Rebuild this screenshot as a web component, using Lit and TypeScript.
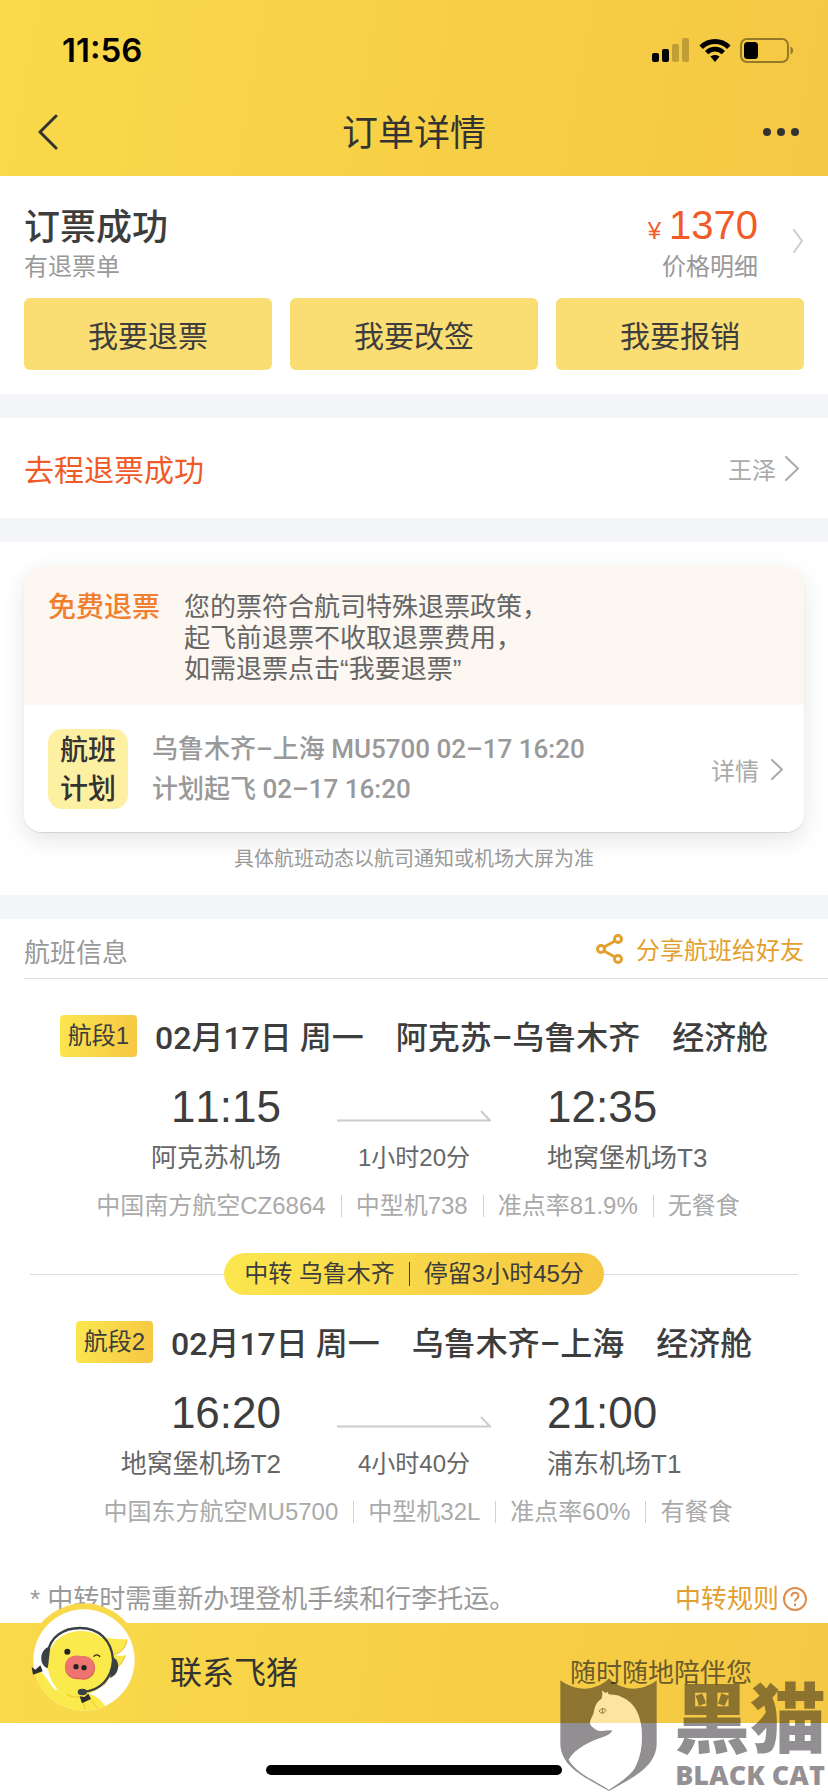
import { LitElement, html, css, svg } from "lit";
import { customElement, property } from "lit/decorators.js";

interface Leg {
  tag: string;
  date: string;
  route: string;
  cabin: string;
  depart: string;
  departAirport: string;
  duration: string;
  arrive: string;
  arriveAirport: string;
  facts: string[];
}

const LEGS: Leg[] = [
  {
    tag: "航段1",
    date: "02月17日 周一",
    route: "阿克苏–乌鲁木齐",
    cabin: "经济舱",
    depart: "11:15",
    departAirport: "阿克苏机场",
    duration: "1小时20分",
    arrive: "12:35",
    arriveAirport: "地窝堡机场T3",
    facts: ["中国南方航空CZ6864", "中型机738", "准点率81.9%", "无餐食"],
  },
  {
    tag: "航段2",
    date: "02月17日 周一",
    route: "乌鲁木齐–上海",
    cabin: "经济舱",
    depart: "16:20",
    departAirport: "地窝堡机场T2",
    duration: "4小时40分",
    arrive: "21:00",
    arriveAirport: "浦东机场T1",
    facts: ["中国东方航空MU5700", "中型机32L", "准点率60%", "有餐食"],
  },
];

const chevron = (w: number, h: number, stroke: number) => html`
  <svg class="chevron" width=${w} height=${h} viewBox="0 0 ${w} ${h}" aria-hidden="true">
    ${svg`<path d="M${stroke} ${stroke / 2} L${w - stroke} ${h / 2} L${stroke} ${h - stroke / 2}"
      fill="none" stroke="currentColor" stroke-width=${stroke} stroke-linecap="round" stroke-linejoin="round"/>`}
  </svg>
`;

@customElement("flight-leg")
export class FlightLeg extends LitElement {
  @property({ attribute: false }) leg!: Leg;

  static styles = css`
    :host {
      display: block;
    }
    .head {
      display: flex;
      justify-content: center;
      align-items: center;
      gap: 18px;
      height: 42px;
    }
    .tag {
      padding: 0 8px;
      border-radius: 4px;
      background: linear-gradient(100deg, #fbe74e, #f6c643);
      color: #3d3d3d;
      font-size: 24px;
      line-height: 42px;
    }
    .title {
      margin: 0;
      padding-top: 4px;
      display: flex;
      gap: 32px;
      color: #3d3d3d;
      font-family: Roboto, "Noto Sans CJK SC", sans-serif;
      font-size: 32px;
      font-weight: 500;
      line-height: 42px;
    }
    .times {
      display: grid;
      grid-template-columns: 1fr 154px 1fr;
      column-gap: 56px;
      row-gap: 7px;
      margin-top: 24px;
      align-items: center;
      color: #666;
      font-size: 26px;
      line-height: 36px;
    }
    .depart {
      text-align: right;
    }
    .clock {
      color: #3d3d3d;
      font-size: 44px;
      font-kerning: none;
      line-height: 52px;
    }
    .arrow {
      display: block;
      padding-top: 18px;
    }
    .duration {
      text-align: center;
      font-size: 24px;
    }
    .facts {
      display: flex;
      justify-content: center;
      margin: 15px 0 0;
      padding: 0 0 0 8px;
      list-style: none;
      color: #aaa;
      font-size: 24px;
      line-height: 30px;
    }
    .fact {
      display: flex;
      align-items: center;
    }
    .fact + .fact::before {
      content: "";
      width: 1px;
      height: 22px;
      margin: 0 14px 0 15px;
      background: #d0d0d0;
    }
  `;

  render() {
    const l = this.leg;
    return html`
      <div class="head">
        <span class="tag">${l.tag}</span>
        <h3 class="title"><span>${l.date}</span><span>${l.route}</span><span>${l.cabin}</span></h3>
      </div>
      <div class="times">
        <span class="depart clock">${l.depart}</span>
        <svg class="arrow" width="154" height="12" viewBox="0 0 154 12" aria-hidden="true">
          <path d="M0 10.5H153L144 1" fill="none" stroke="#ccc" stroke-width="2" />
        </svg>
        <span class="clock">${l.arrive}</span>
        <span class="depart">${l.departAirport}</span>
        <span class="duration">${l.duration}</span>
        <span>${l.arriveAirport}</span>
      </div>
      <ul class="facts">
        ${l.facts.map((f) => html`<li class="fact">${f}</li>`)}
      </ul>
    `;
  }
}

@customElement("app-root")
export class AppRoot extends LitElement {
  static styles = css`
    :host {
      display: block;
      background: #fff;
      color: #333;
      font-family: "Liberation Sans", "Noto Sans CJK SC", sans-serif;
    }
    * {
      box-sizing: border-box;
    }
    button {
      padding: 0;
      border: 0;
      background: none;
      color: inherit;
      font: inherit;
      cursor: pointer;
    }
    a {
      color: inherit;
      text-decoration: none;
    }
    h1,
    h2,
    p {
      margin: 0;
    }
    svg {
      display: block;
    }
    .page {
      position: relative;
      overflow: hidden;
    }
    .top {
      background: linear-gradient(100deg, #f9da4b, #f7d046 50%, #f5c843);
    }
    .status {
      display: flex;
      justify-content: space-between;
      align-items: center;
      height: 88px;
      padding: 12px 34px 0 62px;
      color: #000;
    }
    .clock {
      font-family: Inter, sans-serif;
      font-size: 33px;
      font-weight: 600;
      line-height: 40px;
    }
    .signals {
      display: flex;
      align-items: center;
      gap: 9px;
    }
    .nav {
      display: grid;
      grid-template-columns: 60px 1fr 60px;
      align-items: center;
      height: 88px;
      padding: 0 28px;
    }
    .nav-title {
      padding-top: 4px;
      text-align: center;
      font-size: 36px;
      font-weight: 400;
      line-height: 48px;
    }
    .back {
      justify-self: start;
      padding: 8px 10px;
    }
    .more {
      justify-self: end;
      padding: 10px 0;
    }
    .band {
      border-bottom: 24px solid #f4f5f8;
    }
    .summary {
      padding: 26px 24px 24px;
    }
    .summary-row {
      display: flex;
      align-items: center;
      justify-content: space-between;
    }
    .state {
      font-size: 36px;
      font-weight: 500;
      line-height: 52px;
      color: #3d3d3d;
    }
    .sub {
      color: #999;
      font-size: 24px;
      line-height: 26px;
    }
    .price-link {
      display: flex;
      align-items: center;
      gap: 34px;
      color: #ccc;
      text-align: right;
    }
    .price {
      display: flex;
      justify-content: flex-end;
      align-items: baseline;
      gap: 8px;
      height: 52px;
      color: #f05b28;
      font-size: 40px;
      line-height: 46px;
    }
    .yen {
      font-size: 24px;
      line-height: 30px;
    }
    .actions {
      display: grid;
      grid-template-columns: repeat(3, 1fr);
      gap: 18px;
      margin-top: 18px;
    }
    .action {
      height: 72px;
      border-radius: 6px;
      background: #fade74;
      color: #3d3d3d;
      font-size: 30px;
    }
    .refund {
      display: flex;
      justify-content: space-between;
      align-items: center;
      height: 100px;
      padding: 0 28px 0 24px;
      color: #f05b28;
      font-size: 30px;
    }
    .more-link {
      display: flex;
      align-items: center;
      gap: 8px;
      color: #aaa;
      font-size: 24px;
    }
    .plan {
      padding: 24px 24px 21px;
    }
    .card {
      overflow: hidden;
      border-radius: 18px;
      box-shadow: 0 8px 24px rgba(0, 0, 0, 0.1), 0 1px 1px rgba(0, 0, 0, 0.12);
    }
    .policy {
      display: flex;
      gap: 24px;
      padding: 26px 24px 20px;
      background: #fcf7f1;
      color: #666;
      font-size: 26px;
      line-height: 31px;
    }
    .free {
      flex: none;
      color: #f08030;
      font-size: 28px;
      font-weight: 500;
    }
    .flight {
      display: flex;
      align-items: center;
      padding: 24px 20px 23px 24px;
      background: #fff;
    }
    .plan-tag {
      width: 80px;
      height: 80px;
      padding-top: 2px;
      border-radius: 14px;
      background: #fdf0a3;
      text-align: center;
      font-size: 28px;
      font-weight: 500;
      line-height: 39px;
    }
    .plan-text {
      flex: 1;
      padding-left: 24px;
      color: #999;
      font-family: Roboto, "Noto Sans CJK SC", sans-serif;
      font-size: 26px;
      font-weight: 500;
      line-height: 40px;
    }
    .flight .more-link {
      gap: 11px;
    }
    .disclaimer {
      margin-top: 12px;
      text-align: center;
      color: #999;
      font-size: 20px;
      line-height: 30px;
    }
    .info-head {
      display: flex;
      justify-content: space-between;
      align-items: center;
      height: 60px;
      margin-left: 24px;
      padding-right: 24px;
      border-bottom: 1px solid #ddd;
    }
    .info-title {
      padding-top: 4px;
      color: #999;
      font-size: 26px;
      font-weight: 400;
    }
    .share {
      display: flex;
      align-items: center;
      gap: 12px;
      color: #e3a02f;
      font-size: 24px;
    }
    .legs {
      padding-top: 36px;
    }
    .transfer {
      display: flex;
      align-items: center;
      margin: 32px 30px 26px;
    }
    .transfer::before,
    .transfer::after {
      content: "";
      flex: 1;
      height: 1px;
      background: #ddd;
    }
    .pill {
      display: flex;
      align-items: center;
      gap: 14px;
      padding: 0 20px;
      border-radius: 21px;
      background: linear-gradient(100deg, #fbe74e, #f6c643);
      color: #3d3d3d;
      font-size: 24px;
      line-height: 42px;
    }
    .pill-bar {
      width: 1px;
      height: 24px;
      background: #3d3d3d;
    }
    .note {
      display: flex;
      justify-content: space-between;
      align-items: center;
      margin-top: 54px;
      padding: 0 20px 6px 30px;
      color: #999;
      font-size: 26px;
      line-height: 36px;
    }
    .rules {
      display: flex;
      align-items: center;
      gap: 3px;
      color: #e3a02f;
    }
    .contact {
      position: relative;
      display: flex;
      justify-content: space-between;
      align-items: center;
      width: 100%;
      height: 100px;
      padding: 0 76px 0 170px;
      background: linear-gradient(100deg, #f9da4b, #f7d046 50%, #f5c843);
      font-size: 32px;
      line-height: 44px;
    }
    .avatar {
      position: absolute;
      left: 27px;
      top: -20px;
    }
    .slogan {
      color: #6b5b2c;
      font-size: 26px;
    }
    .home {
      display: flex;
      justify-content: center;
      align-items: center;
      height: 68px;
      padding-top: 26px;
    }
    .home-bar {
      width: 296px;
      height: 10px;
      border-radius: 5px;
      background: #000;
    }
    .mark {
      position: absolute;
      right: 2px;
      bottom: 0;
      display: flex;
      align-items: flex-end;
      gap: 16px;
      pointer-events: none;
    }
    .mark-text {
      display: flex;
      flex-direction: column;
      align-items: center;
      color: rgba(28, 20, 28, 0.48);
    }
    .mark-cn {
      font-size: 76px;
      font-weight: 900;
      line-height: 76px;
    }
    .mark-en {
      font-family: "Open Sans", sans-serif;
      font-size: 27px;
      font-weight: 800;
      line-height: 32px;
      white-space: nowrap;
    }
  `;

  private statusBar() {
    return html`
      <div class="status">
        <span class="clock">11:56</span>
        <div class="signals">
          <svg width="38" height="24" viewBox="0 0 38 24" aria-hidden="true">
            <rect x="0" y="15" width="7" height="9" rx="2" />
            <rect x="10" y="11" width="7" height="13" rx="2" />
            <rect x="20" y="6" width="7" height="18" rx="2" opacity=".22" />
            <rect x="30" y="0" width="7" height="24" rx="2" opacity=".22" />
          </svg>
          <svg width="32" height="24" viewBox="0 0 32 24" aria-hidden="true">
            <path d="M2.2 9.2C10 1.6 22 1.6 29.8 9.2" fill="none" stroke="#000" stroke-width="5" />
            <path d="M7.6 14.6C12.4 10 19.6 10 24.4 14.6" fill="none" stroke="#000" stroke-width="4.6" />
            <path d="M11.4 18.6C14 16.4 18 16.4 20.6 18.6L16 24Z" />
          </svg>
          <svg width="54" height="25" viewBox="0 0 54 25" aria-hidden="true">
            <rect x="1" y="1" width="47" height="23" rx="6" fill="none" stroke="#000" stroke-opacity=".4" stroke-width="2" />
            <rect x="4" y="4" width="14" height="17" rx="3.5" />
            <path d="M50.500 8.500C54 10 54 15 50.500 16.500Z" opacity=".4" />
          </svg>
        </div>
      </div>
    `;
  }

  private pig() {
    return html`
      <svg class="avatar" width="114" height="114" viewBox="22 40 342 342" aria-hidden="true">
        <defs>
          <clipPath id="face"><circle cx="193" cy="211" r="152" /></clipPath>
        </defs>
        <circle cx="193" cy="211" r="170" fill="#f9d94a" />
        <circle cx="193" cy="211" r="152" fill="#fff" />
        <g clip-path="url(#face)">
          <path d="M245 138C270 148 298 150 323 148C318 176 304 190 284 196C298 199 308 198 318 196C312 216 302 232 280 238Z" fill="#fae94c" />
          <path d="M322 152C317 176 304 190 285 194M317 198C310 216 300 230 286 236" fill="none" stroke="#f2b233" stroke-width="3" />
          <path d="M182 124C238 122 272 158 278 210C280 262 246 300 208 312C232 318 248 334 258 352L262 380H100C60 340 40 300 38 250L66 246C78 276 104 304 140 318C100 296 82 256 84 214C88 158 128 126 182 124Z" fill="#fbea4b" />
          <path d="M66 246C84 284 108 306 140 318C150 330 120 300 100 290Z" fill="#fbea4b" />
          <path d="M80 244C84 266 94 284 108 298" fill="none" stroke="#fff" stroke-width="6" stroke-linecap="round" />
          <path d="M140 314C156 322 172 324 186 322M190 334L198 366M212 330L238 360M276 240C270 262 262 278 250 290" fill="none" stroke="#f2b840" stroke-width="2.500" />
        </g>
        <path d="M36 232L47 240L62 227L69 245L40 255Z" fill="#2b2d2e" />
        <path d="M180 320L194 322L206 312L214 328L187 341Z" fill="#2b2d2e" />
        <path d="M84 190C92 140 132 115 181 115C236 115 276 150 280 210C278 262 244 306 186 306" fill="none" stroke="#3b4143" stroke-width="7" />
        <path d="M88 172C60 178 56 226 84 236C88 216 88 196 92 174Z" fill="#3b4143" />
        <path d="M277 203C304 208 302 256 270 265C276 246 278 226 277 203Z" fill="#3b4143" />
        <ellipse cx="188" cy="307" rx="14" ry="10" fill="#3b4143" />
        <rect x="136" y="199" width="90" height="70" rx="34" fill="#e05e5e" transform="rotate(5 181 234)" />
        <rect x="136" y="199" width="87" height="66" rx="32" fill="#ee7471" transform="rotate(5 181 234)" />
        <circle cx="169" cy="231" r="8" fill="#222" />
        <circle cx="193" cy="234" r="8" fill="#222" />
        <circle cx="143" cy="186" r="9" fill="#222" />
        <path d="M222 201C226 194 238 194 241 202" fill="none" stroke="#222" stroke-width="4" />
      </svg>
    `;
  }

  private watermark() {
    const cat =
      "M126 40C128 50 127 58 124 66C108 76 104 90 101 108C97 118 92 126 90 134C90 142 94 148 98 150C106 158 114 162 124 162C136 160 148 160 158 160C152 170 146 174 136 178C92 192 46 214 26 248C50 288 100 308 147 338C176 318 206 300 224 274C244 236 248 196 244 152C240 104 216 66 168 54L146 52L142 44L136 48Z";
    return html`
      <div class="mark">
        <svg width="98" height="114" viewBox="0 0 294 342" aria-hidden="true">
          <defs>
            <clipPath id="below-bar"><rect x="0" y="138" width="294" height="204" /></clipPath>
          </defs>
          <path
            d="M1 10C50 46 110 42 147 4C184 42 244 46 290 10V198C290 270 220 300 147 342C74 300 1 270 1 198Z"
            fill="rgb(28,20,28)" fill-opacity=".48"
          />
          <path d=${cat} fill="#fee59f" />
          <path d=${cat} fill="#fff" clip-path="url(#below-bar)" />
          <path d="M118 102C122 94 134 92 138 100C132 110 122 112 118 102ZM128 95V108" fill="none" stroke="#8a7430" stroke-width="3" />
        </svg>
        <div class="mark-text">
          <span class="mark-cn">黑猫</span>
          <span class="mark-en">BLACK CAT</span>
        </div>
      </div>
    `;
  }

  render() {
    return html`
      <div class="page">
        <header class="top">
          ${this.statusBar()}
          <div class="nav">
            <button class="back" aria-label="返回">
              <svg width="20" height="36" viewBox="0 0 20 36" aria-hidden="true">
                <path d="M18 2L2 18L18 34" fill="none" stroke="#333" stroke-width="3" stroke-linecap="round" stroke-linejoin="round" />
              </svg>
            </button>
            <h1 class="nav-title">订单详情</h1>
            <button class="more" aria-label="更多">
              <svg width="38" height="10" viewBox="0 0 38 10" aria-hidden="true" fill="#333">
                <circle cx="5" cy="5" r="4" />
                <circle cx="19" cy="5" r="4" />
                <circle cx="33" cy="5" r="4" />
              </svg>
            </button>
          </div>
        </header>

        <section class="summary band">
          <div class="summary-row">
            <div>
              <h2 class="state">订票成功</h2>
              <p class="sub">有退票单</p>
            </div>
            <a class="price-link" href="#price">
              <div>
                <p class="price"><span class="yen">¥</span>1370</p>
                <p class="sub">价格明细</p>
              </div>
              ${chevron(12, 24, 2)}
            </a>
          </div>
          <div class="actions">
            <button class="action">我要退票</button>
            <button class="action">我要改签</button>
            <button class="action">我要报销</button>
          </div>
        </section>

        <a class="refund" href="#refund">
          <span>去程退票成功</span>
          <span class="more-link">王泽 ${chevron(16, 25, 2)}</span>
        </a>
        <div class="band"></div>

        <section class="plan band">
          <div class="card">
            <div class="policy">
              <strong class="free">免费退票</strong>
              <p>您的票符合航司特殊退票政策，<br />起飞前退票不收取退票费用，<br />如需退票点击“我要退票”</p>
            </div>
            <div class="flight">
              <div class="plan-tag">航班<br />计划</div>
              <p class="plan-text">乌鲁木齐–上海 MU5700 02–17 16:20<br />计划起飞 02–17 16:20</p>
              <a class="more-link" href="#detail">详情 ${chevron(14, 21, 2)}</a>
            </div>
          </div>
          <p class="disclaimer">具体航班动态以航司通知或机场大屏为准</p>
        </section>

        <section>
          <div class="info-head">
            <h2 class="info-title">航班信息</h2>
            <button class="share">
              <svg width="28" height="30" viewBox="0 0 28 30" aria-hidden="true" fill="none" stroke="currentColor" stroke-width="3">
                <circle cx="22" cy="5" r="3.500" />
                <circle cx="5" cy="15" r="3.500" />
                <circle cx="22" cy="25" r="3.500" />
                <path d="M8 13L19 7M8 17L19 23" />
              </svg>
              分享航班给好友
            </button>
          </div>
          <div class="legs">
            <flight-leg .leg=${LEGS[0]}></flight-leg>
            <div class="transfer">
              <div class="pill">
                <span>中转 乌鲁木齐</span><span class="pill-bar"></span><span>停留3小时45分</span>
              </div>
            </div>
            <flight-leg .leg=${LEGS[1]}></flight-leg>
          </div>
          <div class="note">
            <span>* 中转时需重新办理登机手续和行李托运。</span>
            <a class="rules" href="#rules">
              中转规则
              <svg width="26" height="26" viewBox="0 0 26 26" aria-hidden="true" fill="none" stroke="#e08c4a" stroke-width="2">
                <circle cx="13" cy="13" r="11" />
                <path d="M9.500 10.500C9.500 5.500 16.500 5.500 16.500 10C16.500 12.500 13 12.500 13 15.500M13 17.500V20" />
              </svg>
            </a>
          </div>
        </section>

        <button class="contact">
          ${this.pig()}
          <span>联系飞猪</span>
          <span class="slogan">随时随地陪伴您</span>
        </button>
        <div class="home"><div class="home-bar"></div></div>
        ${this.watermark()}
      </div>
    `;
  }
}
